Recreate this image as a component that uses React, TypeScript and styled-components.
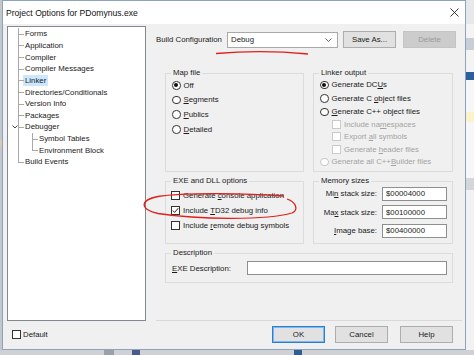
import React from 'react'
import styled, { createGlobalStyle } from 'styled-components'

const GlobalStyle = createGlobalStyle`
  html, body {
    margin: 0;
    padding: 0;
  }
  body {
    background: #c9ced6;
    font-family: "Liberation Sans", Arial, sans-serif;
    color: #1a1a1a;
  }
`

const Screen = styled.div`
  position: relative;
  display: grid;
  grid-template-columns: 2px 464px 8px;
  grid-template-rows: 350px 5px;
  width: 474px;
  height: 355px;
  overflow: hidden;
`

const LeftStrip = styled.div`
  background: linear-gradient(#c4c6c9 0 40%, #d9c9b0 40% 42%, #c4c6c9 42%);
`

const RightStrip = styled.div`
  display: flex;
  flex-direction: column;
  background: #f4f4f4;
`

const StripBlock = styled.div<{ $h: number; $bg: string }>`
  flex: none;
  height: ${p => p.$h}px;
  background: ${p => p.$bg};
`

const BottomStrip = styled.div`
  grid-column: 1 / -1;
  display: flex;
  background: #cfd1d4;
`

const BottomBlock = styled.div<{ $w: number; $bg: string }>`
  flex: none;
  width: ${p => p.$w}px;
  background: ${p => p.$bg};
`

const Window = styled.div`
  display: flex;
  flex-direction: column;
  box-sizing: border-box;
  border: 1px solid #8ca3bf;
  background: #f0f0f0;
  font-size: 7.8px;
`

const TitleBar = styled.div`
  flex: none;
  display: flex;
  align-items: center;
  justify-content: space-between;
  height: 23px;
  padding: 0 6px 0 3px;
  background: #fff;
  font-size: 8.6px;
  color: #111;
`

const Body = styled.div`
  flex: 1;
  display: grid;
  grid-template-columns: 139px 306px;
  grid-template-rows: 295px 1fr;
  column-gap: 10px;
  padding: 2px 0 0 4px;
`

const Tree = styled.div`
  box-sizing: border-box;
  border: 1px solid #828790;
  background: #fff;
  padding-top: 1px;
`

const TreeRow = styled.div`
  display: flex;
  align-items: center;
  height: 11.65px;
  white-space: nowrap;
`

const Guide = styled.span<{ $w: number; $x: number; $stub?: boolean; $half?: boolean }>`
  position: relative;
  flex: none;
  align-self: stretch;
  width: ${p => p.$w}px;

  &::before {
    content: '';
    position: absolute;
    left: ${p => p.$x}px;
    top: 0;
    bottom: ${p => (p.$half ? '50%' : '0')};
    border-left: 1px solid #a9a9a9;
  }

  &::after {
    content: ${p => (p.$stub ? "''" : 'none')};
    position: absolute;
    left: ${p => p.$x}px;
    top: 50%;
    width: ${p => p.$w - p.$x - 1}px;
    border-top: 1px solid #a9a9a9;
  }
`

const Chevron = styled.svg`
  position: absolute;
  left: 4px;
  top: 4px;
`

const TreeLabel = styled.span<{ $selected?: boolean }>`
  padding: 1px 2px;
  margin-left: -2px;
  background: ${p => (p.$selected ? '#cce8ff' : 'transparent')};
`

const Panel = styled.div`
  display: flex;
  flex-direction: column;
  border-bottom: 1px solid #d9d9d9;
`

const ConfigRow = styled.div`
  display: flex;
  align-items: center;
  height: 17px;
  margin-top: 5px;
`

const ConfigLabel = styled.span`
  flex: none;
  width: 71px;
`

const Combo = styled.div`
  box-sizing: border-box;
  display: flex;
  align-items: center;
  justify-content: space-between;
  width: 111px;
  height: 16px;
  padding: 0 5px 0 3px;
  border: 1px solid #a9a9a9;
  background: #fff;
`

const Button = styled.div<{ $primary?: boolean; $disabled?: boolean; $gap?: number }>`
  box-sizing: border-box;
  flex: none;
  display: flex;
  align-items: center;
  justify-content: center;
  width: 53px;
  height: 17px;
  margin-left: ${p => p.$gap ?? 0}px;
  border: 1px solid ${p => (p.$primary ? '#2a7fd4' : p.$disabled ? '#c4c4c4' : '#adadad')};
  box-shadow: ${p => (p.$primary ? 'inset 0 0 0 1px #7fb6ec' : 'none')};
  background: ${p => (p.$disabled ? '#cccccc' : '#e1e1e1')};
  color: ${p => (p.$disabled ? '#9b9b9b' : '#1a1a1a')};
`

const Groups = styled.div`
  display: grid;
  grid-template-columns: 139px 140px;
  grid-template-rows: 104px 68px 35px;
  column-gap: 9px;
  row-gap: 4px;
  margin-top: 20px;
  padding-left: 9px;
`

const Group = styled.fieldset<{ $wide?: boolean }>`
  box-sizing: border-box;
  min-width: 0;
  margin: 0;
  padding: 0;
  border: 1px solid #dcdcdc;
  grid-column: ${p => (p.$wide ? '1 / -1' : 'auto')};
`

const Legend = styled.legend`
  margin-left: 5px;
  padding: 0 2px;
  line-height: 10px;
`

const GroupBody = styled.div<{ $top?: number; $left?: number }>`
  padding: ${p => p.$top ?? 0}px 0 0 ${p => p.$left ?? 6}px;
`

const OptionRow = styled.div<{ $h: number; $indent?: number; $disabled?: boolean }>`
  display: flex;
  align-items: center;
  gap: 3px;
  height: ${p => p.$h}px;
  padding-left: ${p => p.$indent ?? 0}px;
  white-space: nowrap;
  color: ${p => (p.$disabled ? '#a3a3a3' : 'inherit')};
`

const Radio = styled.span<{ $checked?: boolean; $disabled?: boolean }>`
  box-sizing: border-box;
  flex: none;
  display: flex;
  align-items: center;
  justify-content: center;
  width: 8.5px;
  height: 8.5px;
  border-radius: 50%;
  border: 1px solid ${p => (p.$disabled ? '#c6c6c6' : '#333')};
  background: #fff;

  &::after {
    content: '';
    display: ${p => (p.$checked ? 'block' : 'none')};
    width: 4px;
    height: 4px;
    border-radius: 50%;
    background: #111;
  }
`

const Check = styled.span<{ $disabled?: boolean }>`
  box-sizing: border-box;
  flex: none;
  display: flex;
  align-items: center;
  justify-content: center;
  width: 9px;
  height: 9px;
  border: 1px solid ${p => (p.$disabled ? '#cacaca' : '#333')};
  background: #fff;
`

const Key = styled.span`
  text-decoration: underline;
  text-underline-offset: 1px;
`

const MemoryGrid = styled.div`
  display: grid;
  grid-template-columns: 63px 65px;
  grid-auto-rows: 14px;
  column-gap: 5px;
  row-gap: 4.5px;
  align-items: center;
  padding-top: 0.5px;
`

const MemoryLabel = styled.span`
  text-align: right;
  white-space: nowrap;
`

const Field = styled.div<{ $w?: number }>`
  box-sizing: border-box;
  display: flex;
  align-items: center;
  width: ${p => p.$w ?? 65}px;
  height: 14px;
  padding-left: 3px;
  border: 1px solid #8f8f8f;
  background: #fff;
`

const DescRow = styled.div`
  display: flex;
  align-items: center;
`

const DescLabel = styled.span`
  flex: none;
  width: 75px;
`

const Footer = styled.div`
  grid-column: 1 / -1;
  display: flex;
  align-items: center;
  padding: 0 9px 2px 5px;
`

const DefaultBox = styled.label`
  display: flex;
  align-items: center;
  gap: 2px;
`

const Buttons = styled.div`
  display: flex;
  margin-left: auto;
`

const Ink = styled.svg`
  position: absolute;
  left: 0;
  top: 0;
  pointer-events: none;
`

type TreeItem = {
  label: string
  selected?: boolean
  expander?: boolean
  child?: boolean
  lastChild?: boolean
  last?: boolean
}

const treeItems: TreeItem[] = [
  { label: 'Forms' },
  { label: 'Application' },
  { label: 'Compiler' },
  { label: 'Compiler Messages' },
  { label: 'Linker', selected: true },
  { label: 'Directories/Conditionals' },
  { label: 'Version Info' },
  { label: 'Packages' },
  { label: 'Debugger', expander: true },
  { label: 'Symbol Tables', child: true },
  { label: 'Environment Block', child: true, lastChild: true },
  { label: 'Build Events', last: true },
]

const CheckMark = () => (
  <svg width="7" height="7" viewBox="0 0 7 7">
    <polyline points="0.8,3.6 2.6,5.4 6.2,1.2" fill="none" stroke="#222" strokeWidth="1" />
  </svg>
)

export default function App() {
  return (
    <>
      <GlobalStyle />
      <Screen>
        <LeftStrip />
        <Window>
          <TitleBar>
            <span>Project Options for PDomynus.exe</span>
            <svg width="9" height="9" viewBox="0 0 9 9">
              <path d="M0.5 0.5 L8.5 8.5 M8.5 0.5 L0.5 8.5" stroke="#222" strokeWidth="0.9" />
            </svg>
          </TitleBar>
          <Body>
            <Tree>
              {treeItems.map(item => (
                <TreeRow key={item.label}>
                  <Guide $w={17} $x={10} $stub={!item.child} $half={item.last}>
                    {item.expander && (
                      <Chevron width="6" height="4" viewBox="0 0 6 4">
                        <polyline points="0.5,0.5 3,3 5.5,0.5" fill="none" stroke="#333" strokeWidth="0.9" />
                      </Chevron>
                    )}
                  </Guide>
                  {item.child && <Guide $w={14} $x={7} $stub $half={item.lastChild} />}
                  <TreeLabel $selected={item.selected}>{item.label}</TreeLabel>
                </TreeRow>
              ))}
            </Tree>

            <Panel>
              <ConfigRow>
                <ConfigLabel>Build Configuration</ConfigLabel>
                <Combo>
                  <span>Debug</span>
                  <svg width="7" height="4" viewBox="0 0 7 4">
                    <polyline points="0.5,0.5 3.5,3.5 6.5,0.5" fill="none" stroke="#555" strokeWidth="0.9" />
                  </svg>
                </Combo>
                <Button $gap={5}>Save As...</Button>
                <Button $gap={7} $disabled>Delete</Button>
              </ConfigRow>

              <Groups>
                <Group>
                  <Legend>Map file</Legend>
                  <GroupBody>
                    <OptionRow $h={14.67}><Radio $checked />Off</OptionRow>
                    <OptionRow $h={14.67}><Radio /><span><Key>S</Key>egments</span></OptionRow>
                    <OptionRow $h={14.67}><Radio /><span><Key>P</Key>ublics</span></OptionRow>
                    <OptionRow $h={14.67}><Radio /><span><Key>D</Key>etailed</span></OptionRow>
                  </GroupBody>
                </Group>

                <Group>
                  <Legend>Linker output</Legend>
                  <GroupBody>
                    <OptionRow $h={13.5}><Radio $checked /><span>Generate DC<Key>U</Key>s</span></OptionRow>
                    <OptionRow $h={13.5}><Radio /><span>Generate C <Key>o</Key>bject files</span></OptionRow>
                    <OptionRow $h={13.5}><Radio /><span><Key>G</Key>enerate C++ object files</span></OptionRow>
                    <OptionRow $h={12.3} $indent={12} $disabled><Check $disabled /><span>Include na<Key>m</Key>espaces</span></OptionRow>
                    <OptionRow $h={12.3} $indent={12} $disabled><Check $disabled /><span>Export <Key>a</Key>ll symbols</span></OptionRow>
                    <OptionRow $h={12.3} $indent={12} $disabled><Check $disabled /><span>Generate <Key>h</Key>eader files</span></OptionRow>
                    <OptionRow $h={13} $disabled><Radio $disabled /><span>Generate all C++<Key>B</Key>uilder files</span></OptionRow>
                  </GroupBody>
                </Group>

                <Group>
                  <Legend>EXE and DLL options</Legend>
                  <GroupBody $top={2} $left={5}>
                    <OptionRow $h={15}><Check /><span>Generate <Key>c</Key>onsole application</span></OptionRow>
                    <OptionRow $h={15}><Check><CheckMark /></Check><span>Include <Key>T</Key>D32 debug info</span></OptionRow>
                    <OptionRow $h={15}><Check /><span>Include <Key>r</Key>emote debug symbols</span></OptionRow>
                  </GroupBody>
                </Group>

                <Group>
                  <Legend>Memory sizes</Legend>
                  <GroupBody $left={0}>
                    <MemoryGrid>
                      <MemoryLabel>Mi<Key>n</Key> stack size:</MemoryLabel>
                      <Field>$00004000</Field>
                      <MemoryLabel>Ma<Key>x</Key> stack size:</MemoryLabel>
                      <Field>$00100000</Field>
                      <MemoryLabel><Key>I</Key>mage base:</MemoryLabel>
                      <Field>$00400000</Field>
                    </MemoryGrid>
                  </GroupBody>
                </Group>

                <Group $wide>
                  <Legend>Description</Legend>
                  <GroupBody $top={3}>
                    <DescRow>
                      <DescLabel><Key>E</Key>XE Description:</DescLabel>
                      <Field $w={200} />
                    </DescRow>
                  </GroupBody>
                </Group>
              </Groups>
            </Panel>

            <Footer>
              <DefaultBox><Check />Default</DefaultBox>
              <Buttons>
                <Button $primary>OK</Button>
                <Button $gap={10}>Cancel</Button>
                <Button $gap={12}>Help</Button>
              </Buttons>
            </Footer>
          </Body>
        </Window>
        <RightStrip>
          <StripBlock $h={24} $bg="#e6e8eb" />
          <StripBlock $h={14} $bg="#f4f4f4" />
          <StripBlock $h={12} $bg="#c9ced6" />
          <StripBlock $h={22} $bg="#f4f4f4" />
          <StripBlock $h={8} $bg="#2d5f9e" />
          <StripBlock $h={32} $bg="#f7f7f7" />
          <StripBlock $h={10} $bg="#fbf3cc" />
          <StripBlock $h={56} $bg="#f7f7f7" />
          <StripBlock $h={12} $bg="#d3d7dc" />
          <StripBlock $h={160} $bg="#f2f2f2" />
        </RightStrip>
        <BottomStrip>
          <BottomBlock $w={104} $bg="#cfd1d4" />
          <BottomBlock $w={10} $bg="#9aa0a8" />
          <BottomBlock $w={18} $bg="#cfd1d4" />
          <BottomBlock $w={8} $bg="#4a5a8a" />
          <BottomBlock $w={154} $bg="#cfd1d4" />
          <BottomBlock $w={8} $bg="#2e5d8e" />
          <BottomBlock $w={172} $bg="#cfd1d4" />
        </BottomStrip>
        <Ink width="474" height="355" viewBox="0 0 474 355">
          <path d="M216 53.5 Q262 49.5 308 54" fill="none" stroke="#e0201c" strokeWidth="1.3" />
          <path
            d="M284 196 C250 193.5 185 192 158 196.5 C140 200 139 209 158 213.5 C200 220 268 220 292 213 C299 210 296 202 287 199"
            fill="none"
            stroke="#e0201c"
            strokeWidth="1.3"
          />
        </Ink>
      </Screen>
    </>
  )
}
